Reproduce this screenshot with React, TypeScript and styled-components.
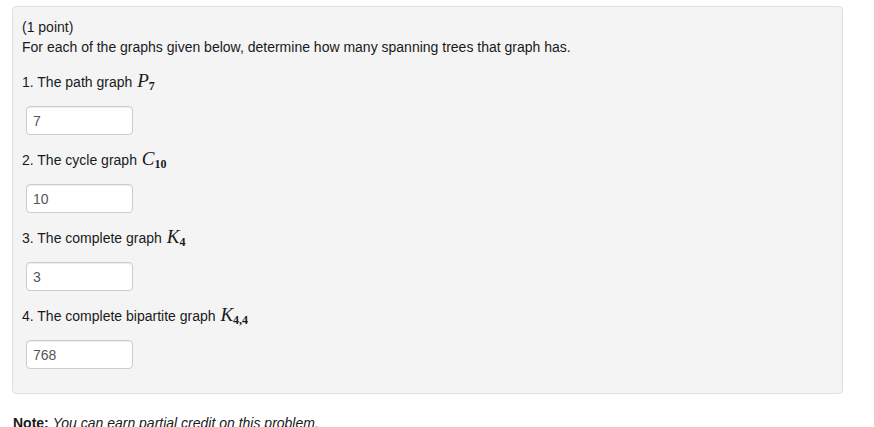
import React from 'react';
import styled, { createGlobalStyle } from 'styled-components';

const GlobalStyle = createGlobalStyle`
  body {
    margin: 0;
    background: #ffffff;
    font-family: "Liberation Sans", Arial, sans-serif;
    font-size: 14px;
    color: #1a1a1a;
  }
`;

const items = [
  { label: '1. The path graph', base: 'P', sub: '7', value: '7' },
  { label: '2. The cycle graph', base: 'C', sub: '10', value: '10' },
  { label: '3. The complete graph', base: 'K', sub: '4', value: '3' },
  { label: '4. The complete bipartite graph', base: 'K', sub: '4,4', value: '768' },
];

const App = () => {
  return (
    <Page>
      <GlobalStyle />
      <ProblemPanel>
        <Line>(1 point)</Line>
        <Line>For each of the graphs given below, determine how many spanning trees that graph has.</Line>
        {items.map((item) => (
          <Item key={item.label}>
            <Label>
              {item.label}{' '}
              <MathVar>
                {item.base}
                <MathSub>{item.sub}</MathSub>
              </MathVar>
            </Label>
            <AnswerInput type="text" defaultValue={item.value} />
          </Item>
        ))}
      </ProblemPanel>
      <Note>
        <b>Note:</b> <i>You can earn partial credit on this problem.</i>
      </Note>
    </Page>
  );
};

export default App;

const Page = styled.div`
  padding: 6px 31px 0 12px;
`;

const ProblemPanel = styled.div`
  background: #f4f4f4;
  border: 1px solid #e0e0e0;
  border-radius: 4px;
  padding: 10px 9px 24px 9px;
`;

const Line = styled.div`
  line-height: 20px;
`;

const Item = styled.div`
  margin-top: 15px;
  &:first-of-type {
    margin-top: 13px;
  }
`;

const Label = styled.div`
  line-height: 20px;
  height: 20px;
`;

const MathVar = styled.span`
  font-family: "Liberation Serif", "Times New Roman", serif;
  font-style: italic;
  font-size: 19px;
  line-height: 0;
  margin-left: 1px;
`;

const MathSub = styled.sub`
  font-style: normal;
  font-weight: bold;
  font-size: 12px;
  line-height: 0;
  vertical-align: -3px;
`;

const AnswerInput = styled.input`
  display: block;
  margin: 14px 0 0 4px;
  box-sizing: border-box;
  width: 107px;
  height: 29px;
  padding: 4px 6px;
  border: 1px solid #cccccc;
  border-radius: 4px;
  background: #ffffff;
  font-family: "Liberation Sans", Arial, sans-serif;
  font-size: 14px;
  color: #555555;
  box-shadow: inset 0 1px 1px rgba(0, 0, 0, 0.075);
  outline: none;
`;

const Note = styled.p`
  margin: 19px 0 0 1px;
  line-height: 20px;
  color: #1a1a1a;
`;
